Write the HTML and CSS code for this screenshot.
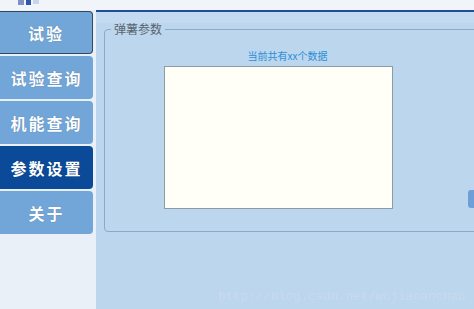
FILE: index.html
```html
<!DOCTYPE html>
<html lang="zh">
<head>
  <meta charset="UTF-8">
  <title>参数设置</title>
  <link rel="stylesheet" href="styles.css">
</head>
<body>
  <div class="topbar">
    <svg class="logo" width="22" height="6" viewBox="0 0 22 6"><rect x="0" y="0" width="6" height="5" fill="#7d93c8"/><rect x="8" y="0" width="5" height="5" fill="#3456a8"/><rect x="15" y="0" width="6" height="4" fill="#c9d3ea"/></svg>
  </div>
  <div class="layout">
    <div class="sidebar">
      <div class="nav-btn first">试验</div>
      <div class="nav-btn">试验查询</div>
      <div class="nav-btn">机能查询</div>
      <div class="nav-btn active">参数设置</div>
      <div class="nav-btn">关于</div>
    </div>
    <div class="main">
      <div class="band"></div>
      <fieldset class="group">
        <legend>弹薯参数</legend>
        <div class="data-block">
          <div class="count">当前共有xx个数据</div>
          <div class="data-box"></div>
        </div>
      </fieldset>
      <div class="side-tab"></div>
      <div class="watermark">http://blog.csdn.net/wojiaoanchao</div>
    </div>
  </div>
</body>
</html>
```

FILE: styles.css
```css
body {
  margin: 0;
  background: #e9f0f8;
  font-family: "Noto Sans CJK SC", sans-serif;
  overflow: hidden;
}
.topbar {
  height: 10px;
  background: #f1f5fa;
}
.logo {
  display: block;
  margin-left: 18px;
}
.layout {
  display: flex;
  height: 299px;
}
.sidebar {
  width: 96px;
  padding-top: 1px;
  display: flex;
  flex-direction: column;
  gap: 2px;
}
.nav-btn {
  width: 93px;
  height: 43px;
  box-sizing: border-box;
  background: #72a5d8;
  border-radius: 0 4px 4px 0;
  color: #fff;
  font-size: 16px;
  font-weight: bold;
  letter-spacing: 2px;
  display: flex;
  align-items: center;
  justify-content: center;
  text-shadow: 0 0 1px rgba(0,0,0,0.3);
}
.nav-btn.first {
  border: 1px solid #34475c;
  border-left: none;
}
.nav-btn.active {
  background: #0b4a98;
}
.main {
  flex: 1;
  position: relative;
  background: #bcd6ee;
  border-top: 2px solid #1e4e9c;
  overflow: hidden;
}
.band {
  height: 11px;
  background: #c4daf0;
}
.group {
  margin: 0 -20px 0 8px;
  padding: 0;
  height: 207px;
  border: 1px solid #8ea9c6;
  border-radius: 4px;
}
.group legend {
  margin-left: 6px;
  padding: 0 3px;
  font-size: 12px;
  color: #5a6470;
  line-height: 12px;
}
.data-block {
  margin-left: 59px;
  width: 229px;
}
.count {
  margin-top: 15px;
  padding-left: 18px;
  text-align: center;
  font-size: 10px;
  color: #2a8fd8;
  line-height: 12px;
}
.data-box {
  margin-top: 4px;
  height: 143px;
  box-sizing: border-box;
  background: #fffff8;
  border: 1px solid #8d9aa8;
}
.side-tab {
  position: absolute;
  right: 0;
  top: 178px;
  width: 6px;
  height: 18px;
  background: #6e9fd6;
  border-radius: 3px 0 0 3px;
}
.watermark {
  position: absolute;
  left: 122px;
  top: 278px;
  font-family: "Liberation Mono", monospace;
  font-size: 12.5px;
  color: #c9daed;
}
```
